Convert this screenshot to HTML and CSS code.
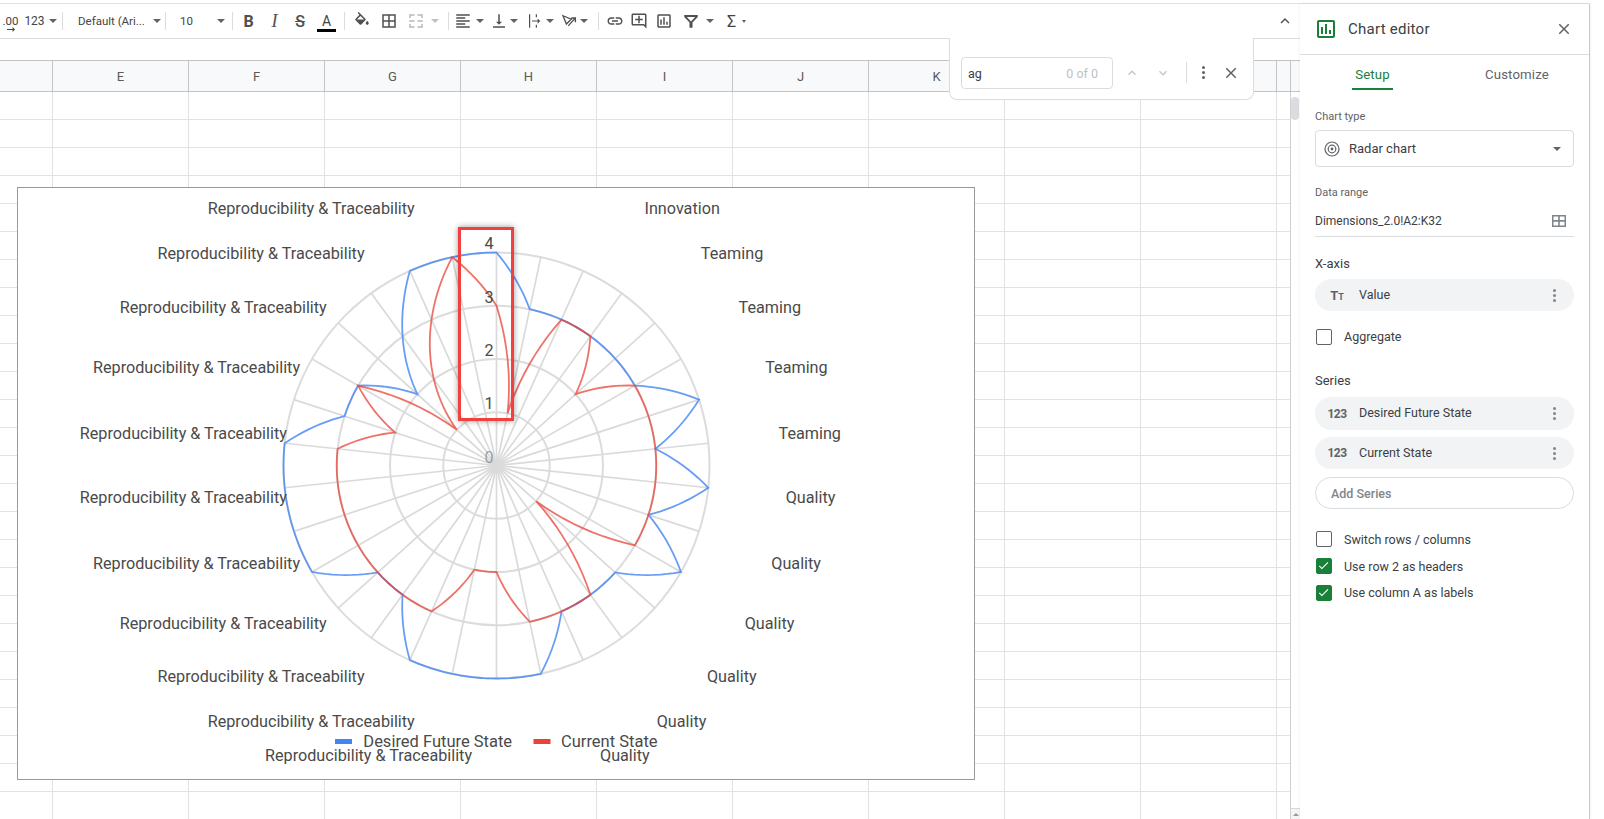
FILE: index.html
```html
<!DOCTYPE html>
<html lang="en">
<head>
<meta charset="utf-8">
<title>Chart editor</title>
<link rel="stylesheet" href="styles.css">
</head>
<body>
<div class="workspace">
  <main class="main">
    <div class="toolbar">
      <div class="tool dec"><span>.00</span><svg class="dec-arrow" viewBox="0 0 10 6"><path d="M0 2.3h7V0l3 3-3 3V3.7H0z"/></svg></div>
      <div class="tool drop num"><span>123</span><i class="caret"></i></div>
      <i class="sep"></i>
      <div class="tool font-pick"><span class="font-name">Default (Ari...</span><i class="caret"></i></div>
      <i class="sep"></i>
      <div class="tool size-pick"><span>10</span><i class="caret"></i></div>
      <i class="sep"></i>
      <div class="tool glyph bold">B</div>
      <div class="tool glyph italic">I</div>
      <div class="tool glyph strike">S</div>
      <div class="tool text-color"><span>A</span><i class="color-bar"></i></div>
      <i class="sep"></i>
      <div class="tool"><svg class="ic" viewBox="0 0 24 24"><path d="M16.56 8.94L7.62 0 6.21 1.41l2.38 2.38-5.15 5.15c-.59.59-.59 1.54 0 2.12l5.5 5.5c.29.29.68.44 1.06.44s.77-.15 1.06-.44l5.5-5.5c.59-.58.59-1.53 0-2.12zM5.21 10L10 5.21 14.79 10H5.21zM19 11.5s-2 2.17-2 3.5c0 1.1.9 2 2 2s2-.9 2-2c0-1.33-2-3.5-2-3.5z"/></svg></div>
      <div class="tool"><svg class="ic" viewBox="0 0 24 24"><path d="M3 3v18h18V3H3zm8 16H5v-6h6v6zm0-8H5V5h6v6zm8 8h-6v-6h6v6zm0-8h-6V5h6v6z"/></svg></div>
      <div class="tool drop wide off"><svg class="ic" viewBox="0 0 24 24"><path d="M3 3h7v2H5v3H3zM14 3h7v5h-2V5h-5zM3 16h2v3h5v2H3zM19 16h2v5h-7v-2h5zM3 11h7v2H3zM14 11h7v2h-7z"/></svg><i class="caret"></i></div>
      <i class="sep"></i>
      <div class="tool drop"><svg class="ic" viewBox="0 0 24 24"><path d="M15 15H3v2h12v-2zm0-8H3v2h12V7zM3 13h18v-2H3v2zm0 8h18v-2H3v2zM3 3v2h18V3H3z"/></svg><i class="caret"></i></div>
      <div class="tool drop tight"><svg class="ic" viewBox="0 0 24 24"><path d="M16 13h-3V3h-2v10H8l4 4 4-4zM4 19v2h16v-2H4z"/></svg><i class="caret"></i></div>
      <div class="tool drop tight"><svg class="ic" viewBox="0 0 24 24"><path d="M4 3h1.6v18H4zM13 3h1.600v4H13zM13 17h1.600v4H13zM8 11.200h7.500V8.500L19 12l-3.500 3.500v-2.700H8z"/></svg><i class="caret"></i></div>
      <div class="tool drop tight"><svg class="ic ic-line" viewBox="0 0 24 24"><path d="M4 5l11 4.500-6.500 6.500zM11 18.500L20 8.500M15 8h5.500v5.500"/></svg><i class="caret"></i></div>
      <i class="sep"></i>
      <div class="tool"><svg class="ic" viewBox="0 0 24 24"><path d="M3.9 12c0-1.71 1.39-3.1 3.1-3.1h4V7H7c-2.76 0-5 2.24-5 5s2.24 5 5 5h4v-1.9H7c-1.71 0-3.1-1.39-3.1-3.1zM8 13h8v-2H8v2zm9-6h-4v1.9h4c1.71 0 3.1 1.39 3.1 3.1s-1.39 3.1-3.1 3.1h-4V17h4c2.76 0 5-2.24 5-5s-2.24-5-5-5z"/></svg></div>
      <div class="tool"><svg class="ic" viewBox="0 0 24 24"><path d="M22 4c0-1.1-.9-2-2-2H4c-1.1 0-2 .9-2 2v12c0 1.1.9 2 2 2h14l4 4V4zm-2 13.17L18.83 16H4V4h16v13.17zM13 5h-2v4H7v2h4v4h2v-4h4V9h-4z"/></svg></div>
      <div class="tool"><svg class="ic" viewBox="0 0 24 24"><path d="M9 17H7v-7h2v7zm4 0h-2V7h2v10zm4 0h-2v-4h2v4zm2 2H5V5h14v14zm0-16H5c-1.1 0-2 .9-2 2v14c0 1.1.9 2 2 2h14c1.1 0 2-.9 2-2V5c0-1.1-.9-2-2-2z"/></svg></div>
      <div class="tool drop wide"><svg class="ic" viewBox="0 0 24 24"><path d="M3 4h18v2.6L14 14v7h-4v-7L3 6.600zM6.500 6.500l5.500 6 5.500-6z" fill-rule="evenodd"/></svg><i class="caret"></i></div>
      <div class="tool drop wide"><span class="sigma">Σ</span><i class="caret small"></i></div>
      <div class="tool-end"><svg class="ic" viewBox="0 0 24 24"><path d="M7.41 15.41L12 10.83l4.59 4.58L18 14l-6-6-6 6z"/></svg></div>
    </div>
    <div class="formula-bar"></div>
    <div class="col-head">
      <div></div>
      <div class="col">E</div><div class="col">F</div><div class="col">G</div><div class="col">H</div>
      <div class="col">I</div><div class="col">J</div><div class="col">K</div>
      <div class="col"></div><div class="col"></div><div class="col"></div><div class="col corner"></div>
    </div>
    <div class="sheet">
      <div class="cells"></div>
      <div class="vscroll"><i class="thumb"></i><div class="scroll-btn"><i></i></div></div>

      <div class="chart">
        <svg class="chart-svg" viewBox="18 188 956 591">
          <g class="rings">
            <circle cx="496.5" cy="465.5" r="53.25"/>
            <circle cx="496.5" cy="465.5" r="106.5"/>
            <circle cx="496.5" cy="465.5" r="159.75"/>
            <circle cx="496.5" cy="465.5" r="213"/>
          </g>
          <g class="spokes" id="spokes"></g>
          <path class="series blue" id="series-desired"/>
          <path class="series red" id="series-current"/>
          <g class="axis">
            <text x="489" y="249">4</text>
            <text x="489" y="303">3</text>
            <text x="489" y="356">2</text>
            <text x="489" y="409">1</text>
            <text x="489" y="463" class="zero">0</text>
          </g>
          <g class="labels">
            <text x="207.700" y="214">Reproducibility &amp; Traceability</text>
            <text x="157.500" y="259">Reproducibility &amp; Traceability</text>
            <text x="119.700" y="312.500">Reproducibility &amp; Traceability</text>
            <text x="93" y="372.500">Reproducibility &amp; Traceability</text>
            <text x="79.800" y="438.500">Reproducibility &amp; Traceability</text>
            <text x="79.800" y="503">Reproducibility &amp; Traceability</text>
            <text x="93" y="568.500">Reproducibility &amp; Traceability</text>
            <text x="119.700" y="629">Reproducibility &amp; Traceability</text>
            <text x="157.500" y="682">Reproducibility &amp; Traceability</text>
            <text x="207.700" y="727">Reproducibility &amp; Traceability</text>
            <text x="265" y="761">Reproducibility &amp; Traceability</text>
            <text x="644.500" y="214">Innovation</text>
            <text x="700.800" y="259">Teaming</text>
            <text x="738.600" y="312.500">Teaming</text>
            <text x="765.200" y="372.500">Teaming</text>
            <text x="778.500" y="438.500">Teaming</text>
            <text x="785.700" y="503">Quality</text>
            <text x="771.300" y="568.500">Quality</text>
            <text x="744.700" y="629">Quality</text>
            <text x="706.900" y="682">Quality</text>
            <text x="656.700" y="727">Quality</text>
            <text x="600" y="761">Quality</text>
            <text class="legend" x="363.300" y="747">Desired Future State</text>
            <text class="legend" x="561" y="747">Current State</text>
          </g>
          <rect class="swatch-blue" x="335" y="739" width="17" height="5"/>
          <rect class="swatch-red" x="533.500" y="739" width="17" height="5"/>
        </svg>
        <div class="highlight"></div>
      </div>
    </div>

    <div class="find-bar">
      <div class="find-input"><span>ag</span><span class="find-count">0 of 0</span></div>
      <svg class="find-nav" viewBox="0 0 24 24"><path d="M7.41 15.41L12 10.83l4.59 4.58L18 14l-6-6-6 6z"/></svg>
      <svg class="find-nav next" viewBox="0 0 24 24"><path d="M7.41 8.59L12 13.17l4.59-4.58L18 10l-6 6-6-6z"/></svg>
      <i class="find-sep"></i>
      <div class="kebab dark"><i></i><i></i><i></i></div>
      <svg class="find-close" viewBox="0 0 24 24"><path d="M19 6.410L17.590 5 12 10.590 6.410 5 5 6.410 10.590 12 5 17.590 6.410 19 12 13.410 17.590 19 19 17.590 13.410 12z"/></svg>
    </div>
  </main>

  <aside class="panel">
    <header class="panel-head">
      <svg class="logo" viewBox="3 3 18 18"><path d="M9 17H7v-7h2v7zm4 0h-2V7h2v10zm4 0h-2v-4h2v4zm2 2H5V5h14v14zm0-16H5c-1.100 0-2 .9-2 2v14c0 1.100.9 2 2 2h14c1.100 0 2-.9 2-2V5c0-1.100-.9-2-2-2z"/></svg>
      <h1 class="panel-title">Chart editor</h1>
      <svg class="panel-close" viewBox="0 0 24 24"><path d="M19 6.410L17.590 5 12 10.590 6.410 5 5 6.410 10.590 12 5 17.590 6.410 19 12 13.410 17.590 19 19 17.590 13.410 12z"/></svg>
    </header>
    <nav class="tabs">
      <div class="tab active">Setup</div>
      <div class="tab">Customize</div>
    </nav>
    <div class="panel-body">
      <div class="field-label first">Chart type</div>
      <div class="select">
        <svg class="radar-ic" viewBox="0 0 16 16"><circle cx="8" cy="8" r="7"/><circle cx="8" cy="8" r="3.800"/><circle class="dot" cx="8" cy="8" r="1.400"/></svg>
        <span class="select-text">Radar chart</span>
        <i class="caret"></i>
      </div>
      <div class="field-label range-label">Data range</div>
      <div class="range">
        <span>Dimensions_2.0!A2:K32</span>
        <svg class="range-ic" viewBox="0 0 14 12"><path d="M0 0h14v12H0zM1.500 1.500v3.500h4.700V1.500zM7.800 1.500v3.500h4.700V1.500zM1.500 6.800v3.700h4.700V6.800zM7.800 6.800v3.700h4.700V6.800z" fill-rule="evenodd"/></svg>
      </div>
      <div class="section-title axis-title">X-axis</div>
      <div class="chip value-chip">
        <span class="chip-ic type-ic">T<small>T</small></span>
        <span class="chip-text">Value</span>
        <div class="kebab"><i></i><i></i><i></i></div>
      </div>
      <label class="check aggregate"><i class="box"></i><span>Aggregate</span></label>
      <div class="section-title series-title">Series</div>
      <div class="chip chip-one">
        <span class="chip-ic num-ic">123</span>
        <span class="chip-text">Desired Future State</span>
        <div class="kebab"><i></i><i></i><i></i></div>
      </div>
      <div class="chip chip-two">
        <span class="chip-ic num-ic">123</span>
        <span class="chip-text">Current State</span>
        <div class="kebab"><i></i><i></i><i></i></div>
      </div>
      <div class="add-series">Add Series</div>
      <label class="check switch-row"><i class="box"></i><span>Switch rows / columns</span></label>
      <label class="check next-row"><i class="box on"><svg viewBox="0 0 24 24"><path d="M9 16.170L4.830 12l-1.420 1.410L9 19 21 7l-1.410-1.410z"/></svg></i><span>Use row 2 as headers</span></label>
      <label class="check next-row"><i class="box on"><svg viewBox="0 0 24 24"><path d="M9 16.170L4.830 12l-1.420 1.410L9 19 21 7l-1.410-1.410z"/></svg></i><span class="lift">Use column A as labels</span></label>
    </div>
  </aside>
</div>
<script src="chart.js"></script>
</body>
</html>
```

FILE: styles.css
```css
* { box-sizing: border-box; }
html, body { margin: 0; height: 100%; }
body {
  width: 1604px;
  height: 819px;
  overflow: hidden;
  background: #fff;
  font-family: Roboto, "Liberation Sans", sans-serif;
  color: #3c4043;
  padding-top: 3px;
}
i { display: block; font-style: normal; }

.workspace {
  width: 1590px;
  height: 816px;
  display: flex;
  border-top: 1px solid #e0e0e0;
}
.main {
  position: relative;
  width: 1300px;
  flex: none;
  display: flex;
  flex-direction: column;
}

/* toolbar */
.toolbar {
  height: 35px;
  flex: none;
  border-bottom: 1px solid #dcdcdc;
  display: grid;
  grid-template-columns: 21px 39px 5px 98px 5px 62px 5px 27px 25px 26px 27px 8px 27px 27px 42px 8px 34px 36px 36px 32px 16px 17px 31px 20px 48px 29px 1fr;
  align-items: center;
  color: #444;
}
.tool { display: flex; align-items: center; justify-content: center; height: 24px; font-size: 12px; }
.drop { gap: 4px; }
.drop.tight { gap: 2px; }
.drop.wide { gap: 6px; }
.off { opacity: .4; }
.ic { width: 18px; height: 18px; fill: #505050; flex: none; }
.ic-line { fill: none; stroke: #505050; stroke-width: 1.800; }
.caret {
  width: 0; height: 0; flex: none;
  border-left: 4px solid transparent;
  border-right: 4px solid transparent;
  border-top: 4px solid #5f6368;
}
.caret.small { border-width: 3px 2.5px 0; }
.sep { justify-self: center; width: 1px; height: 18px; background: #dadce0; }
.dec { flex-direction: column; gap: 0; font-size: 11.500px; line-height: 12px; padding-top: 4px; }
.dec-arrow { width: 8px; height: 5px; fill: #444; }
.font-pick { justify-content: flex-start; padding-left: 13px; gap: 12px; font-size: 11.500px; }
.font-name { width: 63px; white-space: nowrap; }
.size-pick { justify-content: space-between; padding: 0 5px 0 12px; font-size: 11.500px; }
.glyph { font-size: 16px; color: #505050; }
.bold { font-weight: 700; }
.italic { font-family: "Liberation Serif", serif; font-style: italic; font-size: 18px; font-weight: 400; }
.strike { text-decoration: line-through; font-weight: 500; }
.text-color { flex-direction: column; height: 22px; padding-top: 3px; font-size: 14px; line-height: 16px; }
.color-bar { width: 19px; height: 3px; background: #000; }
.sigma { font-size: 16px; }
.tool-end { justify-self: end; margin-right: 6px; display: flex; }
.formula-bar { height: 21px; flex: none; }

/* sheet */
.col-head {
  height: 32px;
  flex: none;
  display: grid;
  grid-template-columns: 52px repeat(9, 136px) 14px 10px;
  background: #f8f9fa;
  border-top: 1px solid #c4c4c4;
  border-bottom: 1px solid #c4c4c4;
}
.col {
  border-left: 1px solid #c4c4c4;
  display: flex;
  align-items: center;
  justify-content: center;
  font-size: 13px;
  color: #5a5a5a;
}
.sheet { position: relative; flex: 1; display: flex; min-height: 0; }
.cells {
  width: 1290px;
  background-image:
    repeating-linear-gradient(90deg, #e2e2e2 52px, #e2e2e2 53px, transparent 53px, transparent 188px),
    repeating-linear-gradient(180deg, transparent 0, transparent 27px, #e2e2e2 27px, #e2e2e2 28px);
}
.vscroll {
  width: 10px;
  border-left: 1px solid #d0d0d0;
  display: flex;
  flex-direction: column;
}
.thumb { width: 8px; height: 23px; margin-top: 5px; border-radius: 4px; background: #dadce0; }
.scroll-btn {
  margin-top: auto;
  height: 11px;
  border-top: 1px solid #d8d8d8;
  background: #f5f5f5;
  display: flex;
  align-items: center;
  justify-content: center;
}
.scroll-btn i {
  width: 0; height: 0;
  border-left: 3px solid transparent;
  border-right: 3px solid transparent;
  border-bottom: 3px solid #999;
}

/* floating chart */
.chart {
  position: absolute;
  left: 17px;
  top: 95px;
  width: 958px;
  height: 593px;
  background: #fff;
  border: 1px solid #999;
}
.chart-svg { display: block; width: 956px; height: 591px; }
.chart-svg text { font-family: Roboto, sans-serif; font-size: 16.200px; fill: #4a4a4a; }
.chart-svg .legend { font-size: 16.500px; }
.axis text { text-anchor: middle; }
.axis .zero { opacity: .45; }
.rings circle { fill: none; stroke: #dcdcdc; stroke-width: 2; }
.spokes { stroke: #dadada; stroke-width: 1.700; }
.series { fill: none; stroke-width: 1.800; stroke-linejoin: miter; }
.series.blue { stroke: #4285f4; opacity: .8; }
.series.red { stroke: #ea4335; opacity: .75; }
.swatch-blue { fill: #4285f4; }
.swatch-red { fill: #ea4335; }
.highlight {
  position: absolute;
  left: 440px;
  top: 39px;
  width: 56px;
  height: 194px;
  border: 3px solid #f04040;
  box-shadow: 0 0 6px rgba(0, 0, 0, .4);
}

/* find bar */
.find-bar {
  position: absolute;
  left: 949px;
  top: 34px;
  width: 305px;
  height: 62px;
  background: #fff;
  border: 1px solid #dadce0;
  border-top: 0;
  border-radius: 0 0 8px 8px;
  padding: 19px 0 0 11px;
  display: flex;
  align-items: center;
}
.find-bar > * { margin-bottom: 11px; flex: none; }
.find-input {
  width: 152px;
  height: 32px;
  border: 1px solid #dadce0;
  border-radius: 4px;
  padding: 2px 14px 0 6px;
  display: flex;
  align-items: center;
  justify-content: space-between;
  font-size: 12.500px;
  color: #3c4043;
}
.find-count { color: #bdc1c6; }
.find-nav { width: 16px; height: 16px; fill: #c4c7ca; margin-left: 11px; }
.find-nav.next { margin-left: 15px; }
.find-sep { width: 1px; height: 21px; background: #dadce0; margin-left: 15px; }
.find-close { width: 18px; height: 18px; fill: #5f6368; margin-left: 17px; }
.kebab { display: flex; flex-direction: column; gap: 2px; flex: none; }
.kebab i { width: 3px; height: 3px; border-radius: 50%; background: #80868b; }
.kebab.dark { margin-left: 15px; }
.kebab.dark i { background: #5f6368; }

/* chart editor */
.panel {
  width: 290px;
  flex: none;
  background: #fff;
  border-right: 1px solid #c8c8c8;
  box-shadow: 0 0 3px rgba(0, 0, 0, .08);
  position: relative;
  display: flex;
  flex-direction: column;
}
.panel-head {
  height: 51px;
  flex: none;
  border-bottom: 1px solid #dadce0;
  padding: 0 17px;
  display: flex;
  align-items: center;
}
.logo { width: 18px; height: 18px; fill: #188038; flex: none; }
.panel-title { margin: 0 0 0 13px; flex: 1; font-size: 15px; font-weight: 400; letter-spacing: .25px; color: #3c4043; }
.panel-close { width: 18px; height: 18px; fill: #5f6368; flex: none; margin-right: -1px; }
.tabs { height: 35px; flex: none; display: flex; padding-left: 52px; }
.tab {
  padding-top: 12px;
  line-height: 16px;
  font-size: 13.200px;
  font-weight: 400;
  letter-spacing: .15px;
  color: #5f6368;
  margin-left: 92px;
}
.tab.active {
  width: 41px;
  margin-left: 0;
  text-align: center;
  color: #188038;
  border-bottom: 2px solid #188038;
}
.panel-body { padding-left: 15px; width: 274px; }
.field-label { font-size: 11px; line-height: 14px; color: #5f6368; }
.field-label.first { margin-top: 20px; }
.range-label { margin-top: 19px; }
.select {
  margin-top: 6px;
  height: 37px;
  border: 1px solid #dadce0;
  border-radius: 4px;
  display: flex;
  align-items: center;
  padding: 0 12px 0 8px;
  font-size: 13px;
}
.radar-ic { width: 16px; height: 16px; flex: none; }
.radar-ic circle { fill: none; stroke: #5f6368; stroke-width: 1.200; }
.radar-ic .dot { fill: #5f6368; stroke: none; }
.select-text { margin-left: 9px; flex: 1; }
.range {
  margin-top: 7px;
  height: 30px;
  border-bottom: 1px solid #dadce0;
  display: flex;
  align-items: center;
  justify-content: space-between;
  padding: 0 8px 1px 0;
  font-size: 12px;
}
.range-ic { width: 14px; height: 12px; fill: #80868b; }
.section-title { font-size: 13px; line-height: 16px; color: #3c4043; }
.axis-title { margin-top: 19px; }
.series-title { margin-top: 28px; }
.chip {
  height: 32px;
  margin-top: 7px;
  border-radius: 16px;
  background: #f1f3f4;
  display: flex;
  align-items: center;
  padding: 0 18px 0 10px;
  font-size: 12.500px;
}
.chip-one { height: 33px; margin-top: 8px; }
.chip-two { margin-top: 7px; }
.chip-ic { width: 24px; flex: none; text-align: center; font-weight: 700; color: #5f6368; }
.type-ic { font-size: 13px; }
.type-ic small { font-size: 9px; }
.num-ic { font-size: 12px; letter-spacing: -.5px; }
.chip-text { flex: 1; margin-left: 10px; padding-bottom: 2px; }
.add-series {
  margin-top: 8px;
  height: 32px;
  border: 1px solid #dadce0;
  border-radius: 16px;
  padding-left: 15px;
  display: flex;
  align-items: center;
  font-size: 12.500px;
  font-weight: 500;
  color: #80868b;
}
.check { display: flex; align-items: center; gap: 12px; height: 16px; font-size: 12.500px; }
.box {
  width: 16px; height: 16px; flex: none;
  margin-left: 1px;
  border: 1.500px solid #5f6368;
  border-radius: 2px;
}
.box.on { background: #188038; border-color: #188038; }
.box svg { display: block; width: 13px; height: 13px; fill: #fff; }
.aggregate { margin-top: 18px; }
.aggregate span, .lift { padding-bottom: 2px; }
.switch-row { margin-top: 22px; }
.next-row { margin-top: 11px; }
```

FILE: chart.js
```js
// Radar chart: radius is interpolated linearly with the angle, as the original does.
var CX = 496.5, CY = 465.5, R = 213, MAX = 4;
var desired = [4,3,3,3,3,3,4,3,4,3,4,3,3,3,4,4,4,4,3,3,4,4,4,4,3,3,2,3,4,4];
var current = [3,1,3,3,2,3,3,3,3,3,3,1,3,3,3,2,2,3,3,3,3,3,3,3,2,3,1,2,3,4];
var N = desired.length;
var SVG_NS = "http://www.w3.org/2000/svg";

function point(value, index) {
  var a = index * 2 * Math.PI / N;
  var r = value / MAX * R;
  return (CX + r * Math.sin(a)).toFixed(2) + " " + (CY - r * Math.cos(a)).toFixed(2);
}

function seriesPath(values) {
  var d = "M" + point(values[0], 0);
  var STEPS = 10;
  for (var i = 0; i < N; i++) {
    var from = values[i], to = values[(i + 1) % N];
    for (var s = 1; s <= STEPS; s++) {
      var t = s / STEPS;
      d += "L" + point(from + (to - from) * t, i + t);
    }
  }
  return d + "Z";
}

var spokes = document.getElementById("spokes");
for (var i = 0; i < N; i++) {
  var line = document.createElementNS(SVG_NS, "path");
  line.setAttribute("d", "M" + CX + " " + CY + "L" + point(MAX, i));
  spokes.appendChild(line);
}
document.getElementById("series-desired").setAttribute("d", seriesPath(desired));
document.getElementById("series-current").setAttribute("d", seriesPath(current));
```
